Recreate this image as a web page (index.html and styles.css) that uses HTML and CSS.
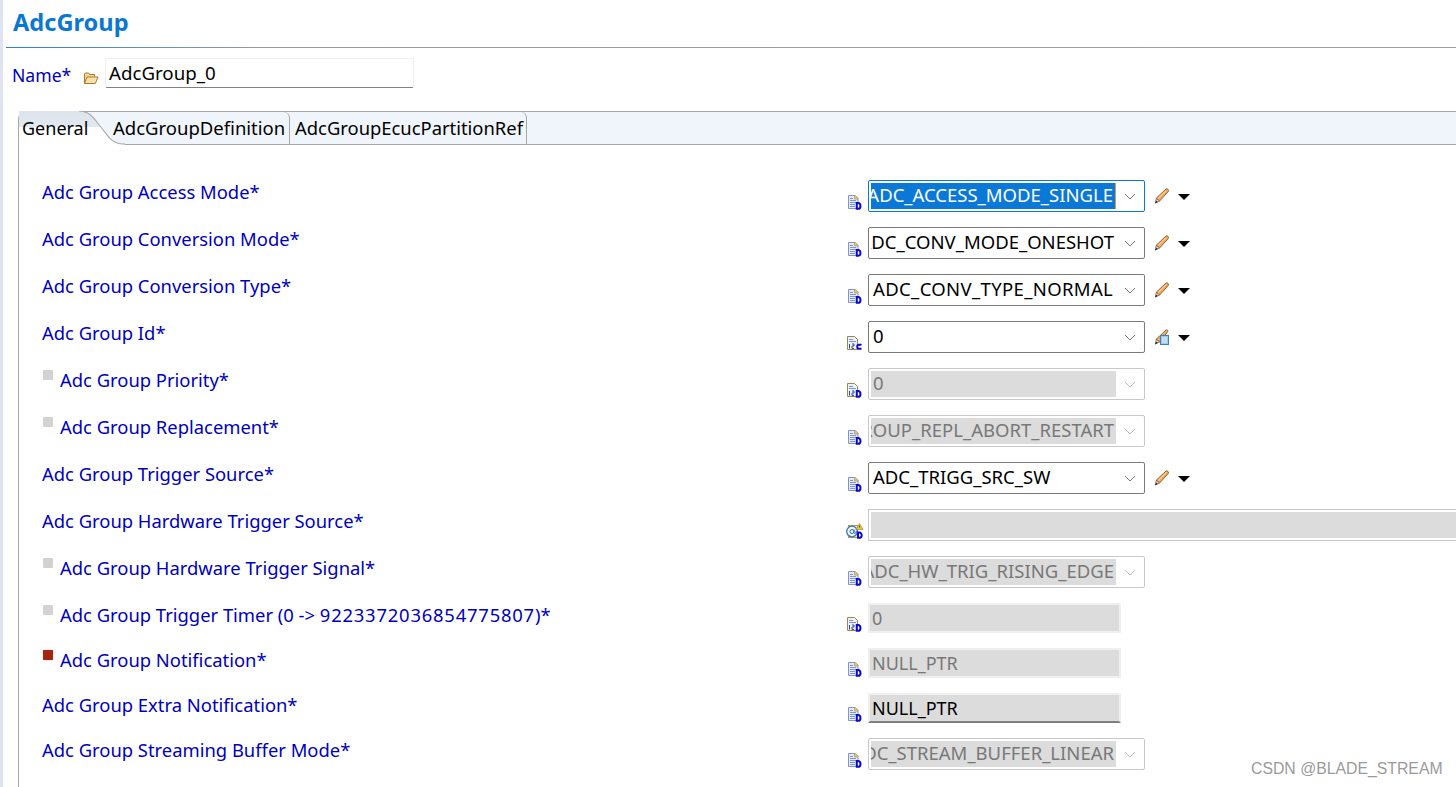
FILE: index.html
```html
<!DOCTYPE html>
<html lang="en">
<head>
<meta charset="utf-8">
<title>AdcGroup</title>
<link rel="stylesheet" href="styles.css">
</head>
<body>
<svg class="defs" width="0" height="0" aria-hidden="true">
  <defs>
    <symbol id="i-doc" viewBox="0 0 16 16">
      <path d="M2.500 1.500h6.500l3 3v10h-9.500z" fill="#e4eaf8" stroke="#8593cc"/>
      <path d="M8.500 1.500h.8l2.700 2.700v.8h-3.500z" fill="#e0c98c" stroke="#b49a55" stroke-width=".8"/>
      <path d="M4 4.500h3M4 6.500h6M4 8.500h6M4 10.500h5M4 12.500h5" stroke="#7f95d8"/>
      <path d="M10.800 9v5.800h1.200c3.300 0 3.300-5.800 0-5.800z" fill="#fff" stroke="#0808d8" stroke-width="2"/>
    </symbol>
    <symbol id="i-num" viewBox="0 0 16 16">
      <path d="M1.500 1.500h7l3 3v10h-10z" fill="#eef1fa" stroke="#9c8748"/>
      <path d="M3 4.500h4M3 6.500h7" stroke="#7f95d8"/>
      <path d="M3.500 9v4.500M6 9h2v2h-2v2.500h2" fill="none" stroke="#2f4aa8"/>
      <path d="M10.800 9v5.800h1.200c3.300 0 3.300-5.800 0-5.800z" fill="#fff" stroke="#0808d8" stroke-width="2"/>
    </symbol>
    <symbol id="i-numc" viewBox="0 0 16 16">
      <path d="M1.500 1.500h7l3 3v10h-10z" fill="#eef1fa" stroke="#9c8748"/>
      <path d="M3 4.500h4M3 6.500h7" stroke="#7f95d8"/>
      <path d="M3.500 9v4.500M6 9h2v2h-2v2.500h2" fill="none" stroke="#2f4aa8"/>
      <path d="M15.500 9.700h-2.700c-2.100 0-2.100 4 0 4h2.700" fill="none" stroke="#0808c8" stroke-width="2"/>
    </symbol>
    <symbol id="i-at" viewBox="0 0 19 16">
      <rect x="3.500" y="2.500" width="9" height="12" fill="#f3f1e2" stroke="#b49a55"/>
      <circle cx="7" cy="8.500" r="5.300" fill="#eef4fb" stroke="#3a78b8" stroke-width="1.300"/>
      <path d="M9 6.500v3c0 1.800 2.500 1 2.300-1.500M9 8.500a2 2 0 1 1-4 0a2 2 0 1 1 4 0" fill="none" stroke="#2f6cb0"/>
      <path d="M14.500 .5l3.500 6h-7z" fill="#f3c23c" stroke="#b08a2a" stroke-width=".7"/>
      <path d="M14.500 2.500v2" stroke="#5a4300"/>
      <path d="M13 9.500v5.300h1.200c3.300 0 3.300-5.300 0-5.300z" fill="#fff" stroke="#0808d8" stroke-width="2"/>
    </symbol>
    <symbol id="i-pencil" viewBox="0 0 16 16">
      <path d="M12 1c1.200-.8 3.200 1 2.400 2.300l-8.800 9.700-3.400-2.700z" fill="#f0a868" stroke="#9c6426"/>
      <path d="M4.200 10.300l8-7.700" stroke="#fbdcb8"/>
      <path d="M2.200 10.300l3.400 2.700-4.300 2z" fill="#f2d3a8" stroke="#7a5a30" stroke-width=".7"/>
      <path d="M.8 15.500l1.500-2.800 1.600 1.300z" fill="#0c1c90"/>
    </symbol>
    <symbol id="i-calc" viewBox="0 0 16 16">
      <path d="M12 1c1.200-.8 2 .4 1.800 1.600l-8.200 10.400-3.400-2.700z" fill="#f0a868" stroke="#9c6426"/>
      <path d="M2.200 10.300l3.400 2.700-4.300 2z" fill="#f2d3a8" stroke="#7a5a30" stroke-width=".7"/>
      <path d="M.8 15.500l1.500-2.800 1.600 1.300z" fill="#0c1c90"/>
      <rect x="6.500" y="6.500" width="8" height="9" fill="#9fcbef" stroke="#3f80bc"/>
      <path d="M8 9h5M8 11h5M8 13h5" stroke="#e4f1fb"/>
    </symbol>
    <symbol id="i-folder" viewBox="0 0 16 14">
      <path d="M1.500 12.500v-9.500l1-1h3l1 1.500h5v2" fill="#f4d699" stroke="#b0782a"/>
      <path d="M1.500 12.500l2.500-6.500h11l-2.700 6.500z" fill="#fbe2ae" stroke="#b0782a"/>
    </symbol>
  </defs>
</svg>

<div class="page">
  <div class="strip"></div>
  <main class="editor">
    <header class="head"><h1 class="title">AdcGroup</h1></header>

    <div class="name-row">
      <span class="name-label">Name*</span>
      <svg class="folder-ico"><use href="#i-folder"/></svg>
      <div class="name-input">AdcGroup_0</div>
    </div>

    <section class="folder">
      <nav class="tabs">
        <div class="tab tab-active">
          <svg class="tab-shape" viewBox="0 0 106 33" preserveAspectRatio="none" aria-hidden="true">
            <defs><linearGradient id="tabgrad" x1="0" y1="0" x2="0" y2="1">
              <stop offset="0" stop-color="#dde4ec"/><stop offset=".47" stop-color="#e2e8ef"/><stop offset=".48" stop-color="#fff"/>
            </linearGradient></defs>
            <path d="M0 33V0H60C72 0 76 9 83 17C90 26 94 32 104 32H106V33Z" fill="url(#tabgrad)"/>
            <path d="M60 0C72 0 76 9 83 17C90 26 94 32 104 32H106" fill="none" stroke="#a6a6a6"/>
          </svg>
          <span class="tab-text">General</span>
        </div>
        <div class="tab tab-def">AdcGroupDefinition</div>
        <div class="tab tab-ref">AdcGroupEcucPartitionRef</div>
      </nav>

      <div class="form">
        <div class="row">
          <div class="label">Adc Group Access Mode*</div>
          <svg class="ico"><use href="#i-doc"/></svg>
          <div class="select focus"><span class="val clip"><span class="sel">ADC_ACCESS_MODE_SINGLE</span></span><svg class="chev" viewBox="0 0 12 7"><path d="M1 1l5 5 5-5"/></svg></div>
          <svg class="act"><use href="#i-pencil"/></svg><span class="menu"></span>
        </div>
        <div class="row">
          <div class="label">Adc Group Conversion Mode*</div>
          <svg class="ico"><use href="#i-doc"/></svg>
          <div class="select"><span class="val clip">ADC_CONV_MODE_ONESHOT</span><svg class="chev" viewBox="0 0 12 7"><path d="M1 1l5 5 5-5"/></svg></div>
          <svg class="act"><use href="#i-pencil"/></svg><span class="menu"></span>
        </div>
        <div class="row">
          <div class="label">Adc Group Conversion Type*</div>
          <svg class="ico"><use href="#i-doc"/></svg>
          <div class="select"><span class="val val-wide">ADC_CONV_TYPE_NORMAL</span><svg class="chev" viewBox="0 0 12 7"><path d="M1 1l5 5 5-5"/></svg></div>
          <svg class="act"><use href="#i-pencil"/></svg><span class="menu"></span>
        </div>
        <div class="row">
          <div class="label">Adc Group Id*</div>
          <svg class="ico"><use href="#i-numc"/></svg>
          <div class="select"><span class="val">0</span><svg class="chev" viewBox="0 0 12 7"><path d="M1 1l5 5 5-5"/></svg></div>
          <svg class="act"><use href="#i-calc"/></svg><span class="menu"></span>
        </div>
        <div class="row">
          <div class="label"><i class="bullet"></i>Adc Group Priority*</div>
          <svg class="ico"><use href="#i-num"/></svg>
          <div class="select off"><span class="val">0</span><svg class="chev" viewBox="0 0 12 7"><path d="M1 1l5 5 5-5"/></svg></div>
        </div>
        <div class="row">
          <div class="label"><i class="bullet"></i>Adc Group Replacement*</div>
          <svg class="ico"><use href="#i-doc"/></svg>
          <div class="select off"><span class="val clip">ADC_GROUP_REPL_ABORT_RESTART</span><svg class="chev" viewBox="0 0 12 7"><path d="M1 1l5 5 5-5"/></svg></div>
        </div>
        <div class="row">
          <div class="label">Adc Group Trigger Source*</div>
          <svg class="ico"><use href="#i-doc"/></svg>
          <div class="select"><span class="val">ADC_TRIGG_SRC_SW</span><svg class="chev" viewBox="0 0 12 7"><path d="M1 1l5 5 5-5"/></svg></div>
          <svg class="act"><use href="#i-pencil"/></svg><span class="menu"></span>
        </div>
        <div class="row">
          <div class="label">Adc Group Hardware Trigger Source*</div>
          <svg class="ico ico-at"><use href="#i-at"/></svg>
          <div class="wide"></div>
        </div>
        <div class="row">
          <div class="label"><i class="bullet"></i>Adc Group Hardware Trigger Signal*</div>
          <svg class="ico"><use href="#i-doc"/></svg>
          <div class="select off"><span class="val clip">ADC_HW_TRIG_RISING_EDGE</span><svg class="chev" viewBox="0 0 12 7"><path d="M1 1l5 5 5-5"/></svg></div>
        </div>
        <div class="row">
          <div class="label"><i class="bullet"></i><span>Adc Group Trigger Timer (0 -&gt; <span class="digits">9223372036854775807</span>)*</span></div>
          <svg class="ico ico-tf"><use href="#i-num"/></svg>
          <div class="field">0</div>
        </div>
        <div class="row">
          <div class="label"><i class="bullet bullet-red"></i>Adc Group Notification*</div>
          <svg class="ico ico-tf"><use href="#i-doc"/></svg>
          <div class="field">NULL_PTR</div>
        </div>
        <div class="row">
          <div class="label">Adc Group Extra Notification*</div>
          <svg class="ico ico-tf"><use href="#i-doc"/></svg>
          <div class="field field-on">NULL_PTR</div>
        </div>
        <div class="row">
          <div class="label">Adc Group Streaming Buffer Mode*</div>
          <svg class="ico"><use href="#i-doc"/></svg>
          <div class="select off"><span class="val clip">ADC_STREAM_BUFFER_LINEAR</span><svg class="chev" viewBox="0 0 12 7"><path d="M1 1l5 5 5-5"/></svg></div>
        </div>
      </div>
    </section>
  </main>
</div>
<div class="watermark">CSDN @BLADE_STREAM</div>
</body>
</html>
```
FILE: styles.css
```css
* { box-sizing: border-box; }
html, body { margin: 0; height: 787px; overflow: hidden; background: #fff; }
body { font-family: "Noto Sans", "Open Sans", sans-serif; font-size: 18px; color: #000; position: relative; }
.defs { position: absolute; }

.page { display: flex; height: 787px; }
.strip { width: 3px; flex: none; background: #dfe3f2; }
.editor { display: flex; flex-direction: column; flex: 1; min-width: 0; }

.head { flex: none; height: 48px; margin-left: 3px; padding-left: 7px; border-bottom: 1px solid transparent; border-image: linear-gradient(90deg, #2a84d2 0, #9a9a9a 260px, #a0a0a0 100%) 1; }
.title { margin: 0; font-size: 23.6px; line-height: 44px; font-weight: 700; color: #0a78d2; }

.name-row { display: flex; flex: none; align-items: flex-start; height: 30px; margin-top: 10px; padding-left: 9px; }
.name-label { width: 71px; font-size: 17.6px; line-height: 34px; color: #0000c0; }
.folder-ico { width: 16px; height: 14px; margin-top: 13px; }
.name-input { width: 309px; height: 30px; margin-left: 6px; padding-left: 3px; font-size: 18.7px; line-height: 28px; border: 1px solid #f0f0f0; border-bottom-color: #808080; border-radius: 2px; }

.folder { flex: 1; margin: 23px 0 0 15px; border-left: 1px solid #a6a6a6; border-top-left-radius: 8px; }
.tabs { position: relative; display: flex; height: 34px; background: #f0f5fb; border-top: 1px solid #a6a6a6; border-bottom: 1px solid #a6a6a6; border-top-left-radius: 8px; }
.tab { line-height: 32px; white-space: nowrap; }
.tab-active { position: relative; width: 94px; padding-left: 3px; }
.tab-shape { position: absolute; left: 0; top: -1px; width: 106px; height: 34px; }
.tab-text { position: relative; }
.tab-def { width: 177px; font-size: 18.5px; border-right: 1px solid #a6a6a6; border-top-right-radius: 6px; }
.tab-ref { width: 237px; padding-left: 5px; font-size: 18.4px; border-right: 1px solid #a6a6a6; border-top-right-radius: 6px; }

.form { display: flex; flex-direction: column; gap: 15px; padding: 35px 0 0 23px; }
.row { display: flex; align-items: flex-start; }
.label { display: flex; align-items: flex-start; flex: none; width: 804px; font-size: 18.4px; line-height: 24px; color: #0000c0; white-space: nowrap; }
.digits { letter-spacing: .8px; }
.bullet { width: 10px; height: 10px; margin: 2px 7px 0 1px; background: #d2d2d2; border-radius: 1px; }
.bullet-red { background: #a5260e; box-shadow: 0 0 1px #777; }

.ico { flex: none; width: 16px; height: 16px; margin: 14px 6px 0 0; }
.ico-tf { margin-top: 13px; }
.ico-at { width: 19px; margin-left: -1px; margin-right: 4px; }

.select { display: flex; align-items: center; flex: none; width: 277px; height: 32px; padding: 2px 0 2px 2px; background: #fff; border: 1px solid #7a7a7a; border-radius: 2px; }
.val { display: flex; width: 245px; height: 26px; padding: 0 2px; overflow: hidden; font-size: 18.5px; line-height: 24px; white-space: nowrap; }
.val-wide { letter-spacing: .35px; }
.clip { justify-content: flex-end; padding-left: 0; }
.sel { color: #fff; }
.focus { border-color: #0a78d7; }
.focus .val { background: #0a78d7; border-right: 1px solid #d8a040; }
.off { border-color: #c8c8c8; }
.off .val { background: #dcdcdc; color: #787878; }
.chev { width: 12px; height: 7px; margin-left: 8px; fill: none; stroke: #7a7a7a; }
.off .chev { stroke: #c0c0c0; }

.act { flex: none; width: 16px; height: 16px; margin: 8px 0 0 9px; }
.menu { flex: none; width: 0; height: 0; margin: 14px 0 0 8px; border-left: 6px solid transparent; border-right: 6px solid transparent; border-top: 6px solid #000; }

.wide { flex: none; width: 700px; height: 32px; background: #dcdcdc; border: 1px solid #c8c8c8; outline: 2px solid #fff; outline-offset: -3px; }

.field { flex: none; width: 253px; height: 30px; padding-left: 2px; line-height: 26px; color: #787878; background: #dcdcdc; border: 2px solid #efefef; }
.field-on { color: #000; border-bottom-color: #808080; }

.watermark { position: absolute; left: 1251px; top: 758px; font-family: "Liberation Sans", sans-serif; font-size: 15.8px; line-height: 22px; color: #9a9a9a; white-space: nowrap; }
```
